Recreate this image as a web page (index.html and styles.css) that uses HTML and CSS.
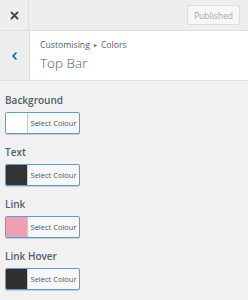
FILE: index.html
```html
<!DOCTYPE html>
<html>
<head>
<meta charset="utf-8">
<link rel="stylesheet" href="styles.css">
</head>
<body>
<div class="panel">
  <div class="topbar">
    <div class="close">
      <svg width="9" height="9" viewBox="0 0 9 9"><path d="M1.5 1.5 L7.5 7.5 M7.5 1.5 L1.5 7.5" stroke="#444" stroke-width="1.8" stroke-linecap="round"/></svg>
    </div>
    <div class="spacer"></div>
    <div class="publish">Published</div>
  </div>
  <div class="header">
    <div class="back">
      <svg width="8" height="10" viewBox="0 0 8 10"><path d="M5.5 1.5 L2.2 5 L5.5 8.5" fill="none" stroke="#0073aa" stroke-width="1.8"/></svg>
    </div>
    <div class="title">
      <div class="crumb">Customising<span class="arrow">▸</span>Colors</div>
      <div class="name">Top Bar</div>
    </div>
  </div>
  <div class="controls">
    <div class="control">
      <div class="label">Background</div>
      <div class="picker"><span class="swatch" style="background:#ffffff"></span><span class="sel">Select Colour</span></div>
    </div>
    <div class="control">
      <div class="label">Text</div>
      <div class="picker"><span class="swatch" style="background:#333333"></span><span class="sel">Select Colour</span></div>
    </div>
    <div class="control">
      <div class="label">Link</div>
      <div class="picker"><span class="swatch" style="background:#f0a0b4"></span><span class="sel">Select Colour</span></div>
    </div>
    <div class="control">
      <div class="label">Link Hover</div>
      <div class="picker"><span class="swatch" style="background:#2f2f2f"></span><span class="sel">Select Colour</span></div>
    </div>
  </div>
</div>
</body>
</html>
```
FILE: styles.css
```css
html, body { margin: 0; padding: 0; }
body {
  width: 248px;
  height: 300px;
  background: #f1f1f1;
  font-family: "Open Sans", "Noto Sans", sans-serif;
  color: #555d66;
  overflow: hidden;
}
.panel { display: flex; flex-direction: column; }
.topbar {
  height: 30px;
  display: flex;
  align-items: center;
  background: #eeeeee;
  border-bottom: 1px solid #dddddd;
}
.close {
  width: 29px;
  height: 30px;
  display: flex;
  align-items: center;
  justify-content: center;
  border-right: 1px solid #dddddd;
  box-sizing: border-box;
}
.spacer { flex: 1; }
.publish {
  width: 53px;
  height: 20px;
  box-sizing: border-box;
  margin-right: 8px;
  border: 1px solid #dddddd;
  background: #f7f7f7;
  color: #a0a5aa;
  font-size: 8.5px;
  display: flex;
  align-items: center;
  justify-content: center;
  border-radius: 2px;
}
.header {
  height: 49px;
  display: flex;
  border-bottom: 1px solid #dddddd;
}
.back {
  width: 30px;
  display: flex;
  align-items: center;
  justify-content: center;
  background: #eeeeee;
  border-right: 1px solid #dddddd;
  box-sizing: border-box;
}
.title {
  flex: 1;
  background: #ffffff;
  padding: 8px 0 0 10px;
}
.crumb {
  font-size: 8.7px;
  line-height: 12px;
  color: #555d66;
}
.arrow { font-size: 6px; vertical-align: 1px; margin: 0 4px; }
.name {
  margin-top: 4px;
  font-size: 13.5px;
  line-height: 16px;
  color: #555d66;
  font-weight: 300;
}
.controls {
  padding: 12px 5px 0 5px;
  display: flex;
  flex-direction: column;
  gap: 11px;
}
.control { display: flex; flex-direction: column; gap: 5px; }
.label {
  font-size: 10px;
  font-weight: 600;
  line-height: 14px;
  color: #555d66;
}
.picker {
  width: 75px;
  height: 22px;
  box-sizing: border-box;
  border: 1px solid #5b9dd9;
  border-radius: 2px;
  background: #f7f7f7;
  display: flex;
  overflow: hidden;
  box-shadow: 0 1px 0 #ccc;
}
.swatch {
  width: 21px;
  border-right: 1px solid #ccc;
}
.sel {
  flex: 1;
  font-size: 7.5px;
  color: #555;
  display: flex;
  align-items: center;
  justify-content: center;
}
```
